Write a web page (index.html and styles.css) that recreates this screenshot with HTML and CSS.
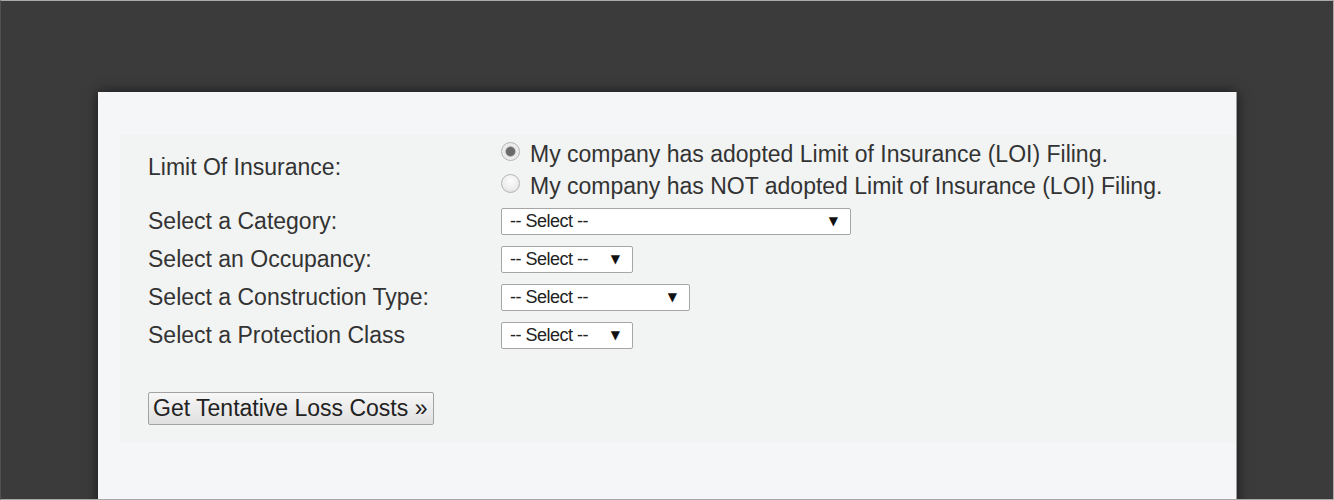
FILE: index.html
```html
<!DOCTYPE html>
<html lang="en">
<head>
<meta charset="utf-8">
<title>Tentative Loss Costs</title>
<link rel="stylesheet" href="styles.css">
</head>
<body>
<div class="frame">
  <div class="panel">
    <form class="form">
      <div class="label label-loi">Limit Of Insurance:</div>
      <div class="radios">
        <label class="radio-row"><input type="radio" name="loi" class="radio" checked> My company has adopted Limit of Insurance (LOI) Filing.</label>
        <label class="radio-row"><input type="radio" name="loi" class="radio"> My company has NOT adopted Limit of Insurance (LOI) Filing.</label>
      </div>

      <div class="label">Select a Category:</div>
      <div class="field"><span class="select-wrap"><select class="select select-wide"><option>-- Select --</option></select></span></div>

      <div class="label">Select an Occupancy:</div>
      <div class="field"><span class="select-wrap"><select class="select select-narrow"><option>-- Select --</option></select></span></div>

      <div class="label">Select a Construction Type:</div>
      <div class="field"><span class="select-wrap"><select class="select select-mid"><option>-- Select --</option></select></span></div>

      <div class="label">Select a Protection Class</div>
      <div class="field"><span class="select-wrap"><select class="select select-narrow"><option>-- Select --</option></select></span></div>

      <div class="actions">
        <button type="button" class="btn">Get Tentative Loss Costs »</button>
      </div>
    </form>
  </div>
</div>
</body>
</html>
```

FILE: styles.css
```css
* { box-sizing: border-box; }

html, body {
  margin: 0;
  padding: 0;
  background: #3b3b3c;
}

.frame {
  width: 1334px;
  height: 500px;
  overflow: hidden;
  background: #3b3b3c;
  border-top: 1px solid #a9a9a9;
  border-right: 1px solid #a9a9a9;
  border-bottom: 1px solid #a9a9a9;
  border-left: 1px solid #505050;
  padding: 91px 0 0 97px;
}

.panel {
  width: 1139px;
  height: 480px;
  background: #f5f6f8;
  border-right: 1px solid #9c9c9c;
  box-shadow: 0 0 12px rgba(0, 0, 0, 0.6);
  padding: 43px 0 0 22px;
}

.form {
  display: grid;
  grid-template-columns: 353px 1fr;
  grid-template-rows: 64px repeat(4, 38px) 38px 33px;
  align-items: center;
  background: #f2f3f3;
  padding: 3px 0 18px 28px;
  font-family: "Liberation Sans", Arial, sans-serif;
  font-size: 23px;
  color: #333;
}

.label {
  line-height: 38px;
  white-space: nowrap;
}

.label-loi {
  height: 64px;
  line-height: 58px;
  align-self: start;
}

.radios {
  height: 64px;
  display: flex;
  flex-direction: column;
  align-self: start;
}

.radio-row {
  display: flex;
  align-items: flex-start;
  height: 32px;
  line-height: 32px;
  white-space: nowrap;
  color: #333;
}

.radio {
  -webkit-appearance: none;
  appearance: none;
  width: 19px;
  height: 19px;
  margin: 4px 10px 0 0;
  border-radius: 50%;
  border: 1px solid #b5b5b5;
  background: radial-gradient(circle at 50% 35%, #fdfdfd 0%, #ececec 60%, #dadada 100%);
  flex: none;
}

.radio:checked {
  background: radial-gradient(circle, #6a6a6a 0 4px, #8a8a8a 4.5px, #e9e9e9 5.5px, #f2f2f2 100%);
}

.field {
  display: flex;
  align-items: center;
  height: 38px;
}

.select-wrap {
  position: relative;
  display: inline-block;
}

.select-wrap::after {
  content: "▼";
  position: absolute;
  right: 13px;
  top: 50%;
  transform: translateY(-50%);
  font-family: "DejaVu Sans", sans-serif;
  font-size: 12px;
  color: #111;
  pointer-events: none;
}

.select {
  -webkit-appearance: none;
  appearance: none;
  height: 27px;
  border: 1px solid #a6a6a6;
  border-radius: 2px;
  background: #fff;
  font-family: "Liberation Sans", Arial, sans-serif;
  font-size: 18px;
  letter-spacing: -0.5px;
  color: #222;
  padding: 0 0 0 8px;
  margin: 0;
  display: block;
}

.select-wide { width: 350px; }
.select-mid { width: 189px; }
.select-narrow { width: 132px; }

.actions {
  grid-column: 1 / -1;
  grid-row: 7;
  align-self: start;
}

.btn {
  height: 33px;
  padding: 0 6px 0 4px;
  border: 1px solid #a2a2a2;
  border-radius: 2px;
  background: linear-gradient(#f7f7f7, #e0e0e0);
  font-family: "Liberation Sans", Arial, sans-serif;
  font-size: 23px;
  color: #222;
  cursor: pointer;
  white-space: nowrap;
}
```
